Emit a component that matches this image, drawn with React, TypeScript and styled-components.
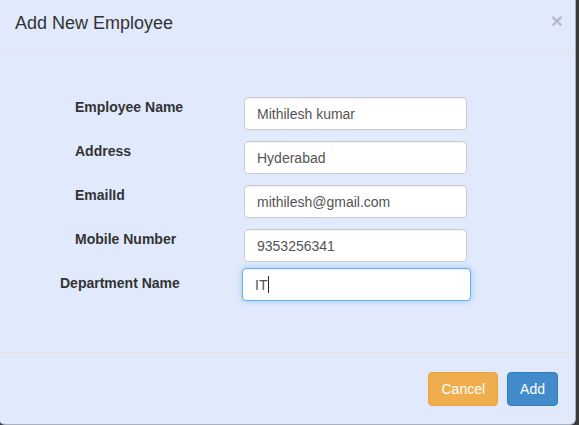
import React from 'react';
import styled, { createGlobalStyle } from 'styled-components';

const GlobalStyle = createGlobalStyle`
  html, body {
    margin: 0;
    padding: 0;
    background: #3a3a3a;
    overflow: hidden;
  }
  body {
    font-family: 'Liberation Sans', Arial, sans-serif;
    font-size: 14px;
    color: #333;
  }
`;

const Modal = styled.div`
  width: 577px;
  height: 425px;
  margin-left: -1px;
  box-sizing: border-box;
  background: #e1eafd;
  border-right: 1px solid rgba(0, 0, 0, 0.25);
  border-bottom: 1px solid rgba(0, 0, 0, 0.25);
  border-radius: 0 0 6px 6px;
  display: flex;
  flex-direction: column;
`;

const Header = styled.div`
  height: 52px;
  box-sizing: border-box;
  padding: 10px 12px 0 16px;
  border-bottom: 1px solid #e3e3e6;
  display: flex;
  align-items: flex-start;
  justify-content: space-between;
`;

const Title = styled.h4`
  margin: 0;
  font-size: 18px;
  font-weight: 400;
  line-height: 26px;
  color: #333;
`;

const Close = styled.button`
  border: 0;
  background: transparent;
  padding: 0;
  margin-top: 0;
  font-family: 'Liberation Sans', Arial, sans-serif;
  font-size: 21px;
  font-weight: 700;
  line-height: 1;
  color: #000;
  opacity: 0.2;
  cursor: pointer;
`;

const Body = styled.div`
  height: 300px;
  box-sizing: border-box;
  padding-top: 45px;
  display: flex;
  flex-direction: column;
`;

const Row = styled.div<{ $indent: number; $labelWidth: number; $top: number }>`
  display: grid;
  grid-template-columns: ${({ $labelWidth }) => $labelWidth}px auto;
  padding-left: ${({ $indent }) => $indent}px;
  margin-top: ${({ $top }) => $top}px;
`;

const Label = styled.label<{ $offset?: number }>`
  font-weight: 700;
  font-size: 14px;
  line-height: 20px;
  color: #333;
  padding-top: ${({ $offset }) => $offset || 0}px;
`;

const Input = styled.input`
  width: 223px;
  height: 33px;
  box-sizing: border-box;
  padding: 6px 12px;
  font-family: 'Liberation Sans', Arial, sans-serif;
  font-size: 14px;
  color: #555;
  background: #fff;
  border: 1px solid #ccc;
  border-radius: 4px;
  box-shadow: inset 0 1px 1px rgba(0, 0, 0, 0.075);
  outline: none;
`;

const FocusedField = styled.div`
  width: 229px;
  height: 33px;
  box-sizing: border-box;
  padding: 6px 12px;
  font-size: 14px;
  line-height: 20px;
  color: #555;
  background: #fff;
  border: 1px solid #66afe9;
  border-radius: 4px;
  box-shadow: inset 0 1px 1px rgba(0, 0, 0, 0.075), 0 0 6px rgba(102, 175, 233, 0.6);
  display: flex;
  align-items: center;
`;

const Caret = styled.span`
  display: inline-block;
  width: 1px;
  height: 17px;
  background: #222;
  margin-left: 1px;
`;

const Footer = styled.div`
  flex: 1;
  border-top: 1px solid #e6e3da;
  padding: 19px 17px 0 0;
  display: flex;
  justify-content: flex-end;
  align-items: flex-start;
  gap: 9px;
`;

const Button = styled.button<{ $variant: 'warning' | 'primary' }>`
  height: 34px;
  padding: 6px 12px;
  font-family: 'Liberation Sans', Arial, sans-serif;
  font-size: 14px;
  line-height: 20px;
  color: #fff;
  border-radius: 4px;
  cursor: pointer;
  background: ${({ $variant }) => ($variant === 'warning' ? '#f0ad4e' : '#428bca')};
  border: 1px solid ${({ $variant }) => ($variant === 'warning' ? '#eea236' : '#357ebd')};
`;

const fields = [
  { label: 'Employee Name', value: 'Mithilesh kumar' },
  { label: 'Address', value: 'Hyderabad' },
  { label: 'EmailId', value: 'mithilesh@gmail.com' },
  { label: 'Mobile Number', value: '9353256341' },
];

export default function App() {
  return (
    <>
      <GlobalStyle />
      <Modal>
        <Header>
          <Title>Add New Employee</Title>
          <Close>×</Close>
        </Header>
        <Body>
          {fields.map((f, i) => (
            <Row key={f.label} $indent={76} $labelWidth={169} $top={i === 0 ? 0 : 11}>
              <Label>{f.label}</Label>
              <Input readOnly value={f.value} />
            </Row>
          ))}
          <Row $indent={61} $labelWidth={182} $top={6}>
            <Label $offset={5}>Department Name</Label>
            <FocusedField>
              IT
              <Caret />
            </FocusedField>
          </Row>
        </Body>
        <Footer>
          <Button $variant="warning">Cancel</Button>
          <Button $variant="primary">Add</Button>
        </Footer>
      </Modal>
    </>
  );
}
